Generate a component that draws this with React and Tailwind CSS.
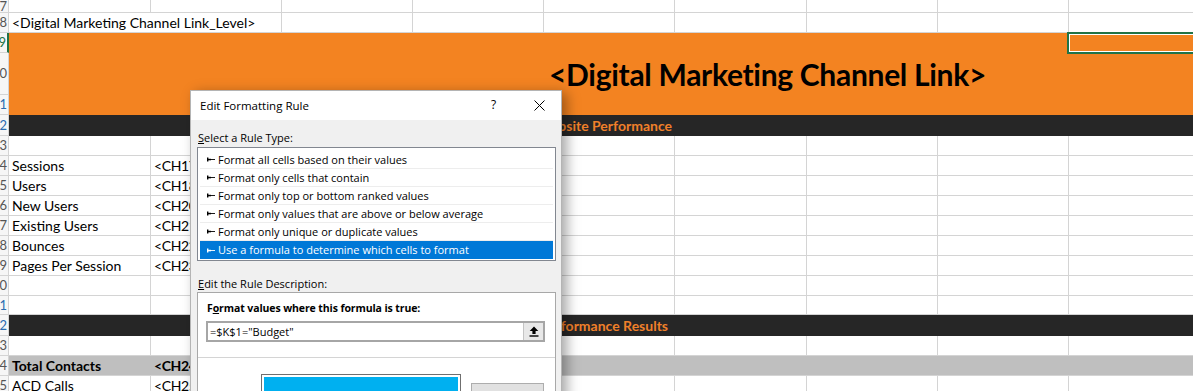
import React from 'react';

const W = ['w-[142px]', 'w-[131px]', 'w-[131px]', 'w-[131px]', 'w-[131px]', 'w-[132px]', 'w-[131px]', 'w-[131px]', 'w-[131px]'];

function Hdr({ n, h, tone = 'text-[#555]', sel = false, align = 'items-center' }) {
  return (
    <div
      className={`${h} w-[9px] shrink-0 overflow-hidden flex ${align} justify-end border-b border-[#d4d4d4] bg-[#f6f6f6] text-[13px] leading-none ${tone} ${sel ? 'border-r-2 border-r-[#217346]' : 'border-r'}`}
    >
      <span className="pr-[1px]">{n}</span>
    </div>
  );
}

function GridRow({ n, h, tone, a, b, bold = false, overflowA = false }) {
  return (
    <div className="flex">
      <Hdr n={n} h={h} tone={tone} />
      {W.map((w, i) => (
        <div
          key={i}
          className={`${w} ${h} shrink-0 border-b border-[#d4d4d4] flex items-center pl-[3px] whitespace-nowrap ${
            i === 0 && overflowA ? 'overflow-visible' : 'border-r overflow-hidden'
          } ${bold ? 'font-bold' : ''}`}
        >
          {i === 0 ? a : i === 1 ? <span className="tracking-[-0.4px]">{b}</span> : null}
        </div>
      ))}
    </div>
  );
}

function DarkRow({ n, h, text, w }) {
  return (
    <div className="flex">
      <Hdr n={n} h={h} tone="text-[#2b6cb0]" />
      <div className={`${h} w-[1191px] shrink-0 bg-[#262626] flex items-center`}>
        <div className={`${w} text-right font-bold text-[#f0802a] text-[14px] whitespace-nowrap`}>{text}</div>
      </div>
    </div>
  );
}

function GrayRow({ n, a, b }) {
  return (
    <div className="flex">
      <Hdr n={n} h="h-[20px]" />
      {W.map((w, i) => (
        <div
          key={i}
          className={`${w} h-[20px] shrink-0 bg-[#bfbfbf] border-b border-[#d4d4d4] flex items-center pl-[3px] whitespace-nowrap overflow-hidden font-bold`}
        >
          {i === 0 ? a : i === 1 ? <span className="tracking-[-0.4px]">{b}</span> : null}
        </div>
      ))}
    </div>
  );
}

function Bullet({ white }) {
  return (
    <svg width="8" height="7" viewBox="0 0 8 7" className="shrink-0">
      <rect x="0" y="1.5" width="1.4" height="4" fill={white ? '#fff' : '#000'} />
      <rect x="0" y="2.8" width="4" height="1.5" fill={white ? '#fff' : '#000'} />
      <rect x="4" y="3.1" width="4" height="0.9" fill={white ? '#fff' : '#000'} />
    </svg>
  );
}

const ITEMS = [
  'Format all cells based on their values',
  'Format only cells that contain',
  'Format only top or bottom ranked values',
  'Format only values that are above or below average',
  'Format only unique or duplicate values',
  'Use a formula to determine which cells to format',
];

function Dialog() {
  return (
    <div className="absolute left-[190px] top-[90px] w-[372px] h-[330px] bg-[#f0f0f0] border border-[#b4b4b4] shadow-[5px_3px_12px_rgba(0,0,0,0.35)] font-['Open_Sans','Noto_Sans',sans-serif] text-[11px] text-black leading-[16px]">
      <div className="h-[29px] bg-white flex items-center pl-[9px] relative">
        <span className="text-[11.5px]">Edit Formatting Rule</span>
        <span className="absolute left-[300px] top-[6px] text-[12px]">?</span>
        <svg className="absolute left-[343px] top-[9px]" width="11" height="11" viewBox="0 0 11 11">
          <path d="M0.5 0.5 L10.5 10.5 M10.5 0.5 L0.5 10.5" stroke="#000" strokeWidth="1" />
        </svg>
      </div>
      <div className="pl-[6px] pr-[5px]">
        <div className="mt-[10px] pl-px h-[17px]">
          <span className="underline">S</span>elect a Rule Type:
        </div>
        <div className="w-[359px] h-[114px] border border-[#828790] bg-white pt-[3px] px-[2px]">
          {ITEMS.map((t, i) => (
            <div
              key={i}
              className={`h-[18px] flex items-center pl-[7px] gap-[3px] whitespace-nowrap ${
                i === 5 ? 'bg-[#0078d7] text-white' : 'border-b border-[#ededed]'
              }`}
            >
              <Bullet white={i === 5} />
              <span>{t}</span>
            </div>
          ))}
        </div>
        <div className="mt-[15px] pl-px h-[16px]">
          <span className="underline">E</span>dit the Rule Description:
        </div>
        <div className="w-[359px] h-[120px] border border-[#a8a8a8] bg-white pt-[7px]">
          <div className="pl-[9px] font-bold h-[16px] text-[10.5px] tracking-[-0.1px]">
            F<span className="underline">o</span>rmat values where this formula is true:
          </div>
          <div className="ml-[8px] mt-[5px] w-[339px] h-[21px] border-2 border-[#a6a6a6] flex items-center">
            <div className="flex-1 pl-[2px] text-[11px]">=$K$1="Budget"</div>
            <div className="w-[20px] h-full bg-[#e8e8e8] border-l border-[#c4c4c4] flex items-center justify-center">
              <svg width="10" height="11" viewBox="0 0 10 11">
                <path d="M5 0.5 L9.3 5 H6.6 V8 H3.4 V5 H0.7 Z" fill="#000" />
                <rect x="0.5" y="9.3" width="9" height="1.4" fill="#000" />
              </svg>
            </div>
          </div>
          <div className="mt-[15px] border-t border-[#d4d4d4]" />
          <div className="flex items-start mt-[16px]">
            <div className="ml-[63px] w-[200px] h-[40px] border border-[#6f6f6f] p-[2px] bg-white">
              <div className="w-full h-full bg-[#00b0f0]" />
            </div>
            <div className="ml-[10px] mt-[9px] w-[73px] h-[24px] bg-[#e1e1e1] border border-[#adadad]" />
          </div>
        </div>
      </div>
    </div>
  );
}

export default function App() {
  return (
    <div className="relative w-[1193px] h-[391px] overflow-hidden bg-white font-['Lato',sans-serif] text-[14px] text-black">
      <div className="flex flex-col w-[1200px]">
        <div className="flex">
          <Hdr n="7" h="h-[13px]" align="items-start" />
          {W.map((w, i) => (
            <div key={i} className={`${w} h-[13px] shrink-0 border-b border-r border-[#d4d4d4]`} />
          ))}
        </div>
        <GridRow n="8" h="h-[20px]" a="<Digital Marketing Channel Link_Level>" overflowA />
        <div className="flex">
          <div className="flex flex-col">
            <Hdr n="9" h="h-[20px]" tone="text-[#217346]" sel />
            <Hdr n="10" h="h-[42px]" />
            <Hdr n="11" h="h-[20px]" tone="text-[#2b6cb0]" />
          </div>
          <div className="w-[1191px] h-[82px] bg-[#f38321] flex flex-col">
            <div className="h-[20px] flex">
              <div className="ml-[1058px] -mt-px w-[140px] h-[22px] border-2 border-[#217346]">
                <div className="w-full h-full border border-white" />
              </div>
            </div>
            <div className="h-[42px] flex items-center pl-[540px]">
              <span className="text-[30px] leading-none font-bold text-black whitespace-nowrap tracking-[-0.3px]">
                &lt;Digital Marketing Channel Link&gt;
              </span>
            </div>
            <div className="h-[20px]" />
          </div>
        </div>
        <DarkRow n="12" h="h-[21px]" text="Website Performance" w="w-[663px]" />
        <GridRow n="13" h="h-[20px]" />
        <GridRow n="14" h="h-[20px]" a="Sessions" b="<CH17>" />
        <GridRow n="15" h="h-[20px]" a="Users" b="<CH18>" />
        <GridRow n="16" h="h-[20px]" a="New Users" b="<CH20>" />
        <GridRow n="17" h="h-[20px]" a="Existing Users" b="<CH21>" />
        <GridRow n="18" h="h-[20px]" a="Bounces" b="<CH22>" />
        <GridRow n="19" h="h-[20px]" a="Pages Per Session" b="<CH23>" />
        <GridRow n="20" h="h-[20px]" />
        <GridRow n="21" h="h-[19px]" tone="text-[#2b6cb0]" />
        <DarkRow n="22" h="h-[21px]" text="Contact Center Performance Results" w="w-[659px]" />
        <GridRow n="23" h="h-[20px]" />
        <GrayRow n="24" a="Total Contacts" b="<CH24>" />
        <GridRow n="25" h="h-[20px]" a="ACD Calls" b="<CH25>" />
      </div>
      <Dialog />
    </div>
  );
}
